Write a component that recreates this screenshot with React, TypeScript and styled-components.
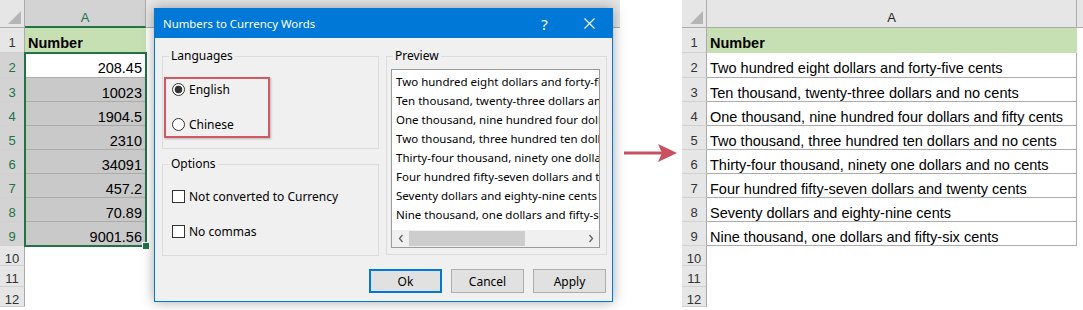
import styled, { createGlobalStyle } from 'styled-components';

const GlobalStyle = createGlobalStyle`
  html, body {
    margin: 0;
    padding: 0;
    background: #fff;
  }
  body {
    width: 1083px;
    height: 310px;
    overflow: hidden;
    font-family: "Liberation Sans", Arial, sans-serif;
  }
`;

const words = [
  'Two hundred eight dollars and forty-five cents',
  'Ten thousand, twenty-three dollars and no cents',
  'One thousand, nine hundred four dollars and fifty cents',
  'Two thousand, three hundred ten dollars and no cents',
  'Thirty-four thousand, ninety one dollars and no cents',
  'Four hundred fifty-seven dollars and twenty cents',
  'Seventy dollars and eighty-nine cents',
  'Nine thousand, one dollars and fifty-six cents',
];

const numbers = ['208.45', '10023', '1904.5', '2310', '34091', '457.2', '70.89', '9001.56'];

const rowHeights = [25, 25, 24, 24, 24, 24, 24, 24, 24, 20, 21, 20];

const GREEN = '#217346';
const GRID = '#ababab';

/* ---------- page ---------- */

const Page = styled.div`
  display: flex;
  align-items: flex-start;
  width: 1083px;
  height: 310px;
  overflow: hidden;
`;

const LeftArea = styled.div`
  position: relative;
  width: 620px;
  flex: none;
`;

const ArrowArea = styled.div`
  width: 62px;
  flex: none;
  padding: 143px 0 0 4px;
  box-sizing: border-box;
`;

const RightArea = styled.div`
  flex: 1;
`;

/* ---------- spreadsheet ---------- */

const Sheet = styled.div`
  display: flex;
  width: 100%;
`;

const Column = styled.div<{ $width?: number }>`
  display: flex;
  flex-direction: column;
  width: ${({ $width }) => ($width ? `${$width}px` : 'auto')};
  flex: ${({ $width }) => ($width ? 'none' : '1')};
`;

const Corner = styled.div`
  height: 28px;
  box-sizing: border-box;
  background: #e6e6e6;
  border-bottom: 1px solid ${GRID};
  border-right: 1px solid ${GRID};
  display: flex;
  align-items: flex-end;
  justify-content: flex-end;
  padding: 0 3px 3px 0;
`;

const CornerTriangle = styled.div`
  width: 0;
  height: 0;
  border-left: 13px solid transparent;
  border-bottom: 13px solid #b5b5b5;
`;

const ColHead = styled.div<{ $selected?: boolean }>`
  height: 28px;
  box-sizing: border-box;
  background: ${({ $selected }) => ($selected ? '#d3d3d3' : '#e6e6e6')};
  color: ${({ $selected }) => ($selected ? GREEN : '#222')};
  border-bottom: ${({ $selected }) => ($selected ? `2px solid ${GREEN}` : `1px solid ${GRID}`)};
  border-right: 1px solid ${GRID};
  font-size: 13px;
  line-height: 15px;
  text-align: center;
  padding-top: 10px;
`;

const FillerHead = styled.div`
  height: 28px;
  box-sizing: border-box;
  background: #e6e6e6;
  border-bottom: 1px solid ${GRID};
`;

const RowHead = styled.div<{ $h: number; $selected?: boolean }>`
  height: ${({ $h }) => $h}px;
  box-sizing: border-box;
  background: ${({ $selected }) => ($selected ? '#d3d3d3' : '#e6e6e6')};
  color: ${({ $selected }) => ($selected ? GREEN : '#333')};
  border-bottom: 1px solid #d0d0d0;
  border-right: 1px solid ${GRID};
  font-size: 13px;
  line-height: 14px;
  display: flex;
  align-items: center;
  justify-content: center;
  padding-top: 6px;
`;

const Cell = styled.div<{ $h: number; $fill?: string; $bordered?: boolean; $align?: string; $bold?: boolean }>`
  height: ${({ $h }) => $h}px;
  box-sizing: border-box;
  background: ${({ $fill }) => $fill || '#fff'};
  border-bottom: 1px solid ${({ $bordered }) => ($bordered ? GRID : 'transparent')};
  border-right: 1px solid ${({ $bordered }) => ($bordered ? GRID : 'transparent')};
  font-size: 14.5px;
  line-height: 17px;
  font-weight: ${({ $bold }) => ($bold ? 700 : 400)};
  color: #000;
  text-align: ${({ $align }) => $align || 'left'};
  padding: 7px 3px 0 3px;
  white-space: nowrap;
  overflow: hidden;
`;

const Selection = styled.div`
  position: relative;
  display: flex;
  flex-direction: column;

  &::before {
    content: '';
    position: absolute;
    inset: -1px -1px -1px -1px;
    border: 2px solid ${GREEN};
    pointer-events: none;
    z-index: 1;
  }

  &::after {
    content: '';
    position: absolute;
    right: -4px;
    bottom: -4px;
    width: 6px;
    height: 6px;
    background: ${GREEN};
    border: 1px solid #fff;
    z-index: 2;
  }
`;

const RowHeaders = ({ selected }: { selected?: boolean }) => (
  <Column $width={25}>
    <Corner>
      <CornerTriangle />
    </Corner>
    {rowHeights.map((h, i) => (
      <RowHead key={i} $h={h} $selected={selected && i >= 1 && i <= 8}>
        {i + 1}
      </RowHead>
    ))}
  </Column>
);

const Filler = () => (
  <Column>
    <FillerHead />
  </Column>
);

const SourceSheet = () => (
  <Sheet>
    <RowHeaders selected />
    <Column $width={121}>
      <ColHead $selected>A</ColHead>
      <Cell $h={rowHeights[0]} $fill="#c6e0b4" $bold>
        Number
      </Cell>
      <Selection>
        {numbers.map((n, i) => (
          <Cell key={n} $h={rowHeights[i + 1]} $fill={i === 0 ? '#fff' : '#c9c9c9'} $bordered $align="right">
            {n}
          </Cell>
        ))}
      </Selection>
    </Column>
    <Filler />
  </Sheet>
);

const ResultSheet = () => (
  <Sheet>
    <RowHeaders />
    <Column $width={370}>
      <ColHead>A</ColHead>
      <Cell $h={rowHeights[0]} $fill="#c6e0b4" $bold>
        Number
      </Cell>
      {words.map((w, i) => (
        <Cell key={w} $h={rowHeights[i + 1]} $bordered>
          {w}
        </Cell>
      ))}
    </Column>
    <Filler />
  </Sheet>
);

/* ---------- dialog ---------- */

const Dialog = styled.div`
  position: absolute;
  left: 154px;
  top: 8px;
  width: 459px;
  height: 294px;
  box-sizing: border-box;
  border: 1px solid #0078d7;
  background: #f0f0f0;
  box-shadow: 0 0 12px rgba(0, 0, 0, 0.35);
  display: flex;
  flex-direction: column;
  font-family: "Noto Sans", "Open Sans", sans-serif;
  font-size: 11.5px;
  color: #000;
  z-index: 5;
`;

const TitleBar = styled.div`
  height: 29px;
  flex: none;
  background: #0078d7;
  color: #fff;
  display: flex;
  align-items: center;
  padding-left: 8px;
`;

const Title = styled.div`
  flex: 1;
  font-size: 11.4px;
`;

const TitleButton = styled.div`
  width: 45px;
  height: 29px;
  display: flex;
  align-items: center;
  justify-content: center;
  font-size: 15px;
`;

const Body = styled.div`
  display: grid;
  grid-template-columns: 217px 221px;
  column-gap: 7px;
  padding: 10px 5px 0 7px;
`;

const LeftStack = styled.div`
  display: flex;
  flex-direction: column;
  gap: 7px;
`;

const Group = styled.fieldset<{ $h: number; $pt: number; $pl: number }>`
  margin: 0;
  min-width: 0;
  box-sizing: border-box;
  height: ${({ $h }) => $h}px;
  border: 1px solid #dcdcdc;
  padding: ${({ $pt, $pl }) => `${$pt}px 0 0 ${$pl}px`};
  display: flex;
  flex-direction: column;
`;

const Legend = styled.legend<{ $ml: number }>`
  padding: 0 2px;
  margin-left: ${({ $ml }) => $ml}px;
  line-height: 16px;
  font-size: 12px;
`;

const RadioFrame = styled.div`
  width: 106px;
  height: 61px;
  box-sizing: border-box;
  border: 2px solid #d05a63;
  box-shadow: 1px 1px 2px rgba(0, 0, 0, 0.25);
  display: flex;
  flex-direction: column;
  gap: 15px;
  padding-left: 6px;
`;

const OptionRow = styled.label`
  height: 20px;
  display: flex;
  align-items: center;
  gap: 4px;
  font-size: 12px;
`;

const RadioDot = styled.span<{ $checked?: boolean }>`
  width: 13px;
  height: 13px;
  box-sizing: border-box;
  border-radius: 50%;
  border: 1px solid #333;
  background: ${({ $checked }) =>
    $checked ? 'radial-gradient(circle, #333 0 3.5px, #fff 4.2px)' : '#fff'};
`;

const CheckBox = styled.span`
  width: 13px;
  height: 13px;
  box-sizing: border-box;
  border: 1px solid #333;
  background: #fff;
`;

const OptionList = styled.div`
  display: flex;
  flex-direction: column;
  gap: 15px;
`;

const ListBox = styled.div`
  width: 209px;
  height: 179px;
  box-sizing: border-box;
  border: 1px solid #9a9a9a;
  background: #fff;
  display: flex;
  flex-direction: column;
`;

const Lines = styled.div`
  flex: 1;
  overflow: hidden;
  padding: 2px 0 0 4px;
`;

const Line = styled.div`
  line-height: 19px;
  white-space: nowrap;
`;

const HScroll = styled.div`
  height: 17px;
  flex: none;
  background: #f0f0f0;
  display: flex;
  align-items: stretch;
`;

const ScrollArrow = styled.div`
  width: 17px;
  display: flex;
  align-items: center;
  justify-content: center;
`;

const Track = styled.div`
  flex: 1;
  display: flex;
  align-items: stretch;
`;

const Thumb = styled.div`
  width: 116px;
  background: #cdcdcd;
  margin: 1px 0;
`;

const ButtonRow = styled.div`
  display: flex;
  justify-content: flex-end;
  gap: 8px;
  padding: 13px 6px 0 0;
`;

const Button = styled.button<{ $primary?: boolean }>`
  width: 73px;
  height: 24px;
  box-sizing: border-box;
  background: #e1e1e1;
  border: ${({ $primary }) => ($primary ? '2px solid #0078d7' : '1px solid #adadad')};
  font-family: inherit;
  font-size: 12px;
  color: #000;
  padding: 0;
  margin-left: ${({ $primary }) => ($primary ? '0' : '1px')};
`;

const Chevron = ({ dir }: { dir: 'left' | 'right' }) => (
  <svg width="6" height="9" viewBox="0 0 6 9">
    <path
      d={dir === 'left' ? 'M4.5 1 L1.5 4.5 L4.5 8' : 'M1.5 1 L4.5 4.5 L1.5 8'}
      fill="none"
      stroke="#606060"
      strokeWidth="1.3"
    />
  </svg>
);

const CurrencyDialog = () => (
  <Dialog>
    <TitleBar>
      <Title>Numbers to Currency Words</Title>
      <TitleButton>?</TitleButton>
      <TitleButton>
        <svg width="11" height="11" viewBox="0 0 11 11">
          <path d="M0.5 0.5 L10.5 10.5 M10.5 0.5 L0.5 10.5" stroke="#fff" strokeWidth="1.1" />
        </svg>
      </TitleButton>
    </TitleBar>
    <Body>
      <LeftStack>
        <Group $h={101} $pt={13} $pl={1}>
          <Legend $ml={5}>Languages</Legend>
          <RadioFrame>
            <OptionRow>
              <RadioDot $checked />
              English
            </OptionRow>
            <OptionRow>
              <RadioDot />
              Chinese
            </OptionRow>
          </RadioFrame>
        </Group>
        <Group $h={100} $pt={14} $pl={9}>
          <Legend $ml={-3}>Options</Legend>
          <OptionList>
            <OptionRow>
              <CheckBox />
              Not converted to Currency
            </OptionRow>
            <OptionRow>
              <CheckBox />
              No commas
            </OptionRow>
          </OptionList>
        </Group>
      </LeftStack>
      <Group $h={207} $pt={5} $pl={4}>
        <Legend $ml={2}>Preview</Legend>
        <ListBox>
          <Lines>
            {words.map((w) => (
              <Line key={w}>{w}</Line>
            ))}
          </Lines>
          <HScroll>
            <ScrollArrow>
              <Chevron dir="left" />
            </ScrollArrow>
            <Track>
              <Thumb />
            </Track>
            <ScrollArrow>
              <Chevron dir="right" />
            </ScrollArrow>
          </HScroll>
        </ListBox>
      </Group>
    </Body>
    <ButtonRow>
      <Button $primary>Ok</Button>
      <Button>Cancel</Button>
      <Button>Apply</Button>
    </ButtonRow>
  </Dialog>
);

const Arrow = () => (
  <svg width="54" height="20" viewBox="0 0 54 20">
    <path d="M0 10 L40 10" stroke="#c9505e" strokeWidth="3" />
    <path d="M34 1 L53 10 L34 19 L38 10 Z" fill="#c9505e" />
  </svg>
);

export default function App() {
  return (
    <>
      <GlobalStyle />
      <Page>
        <LeftArea>
          <SourceSheet />
          <CurrencyDialog />
        </LeftArea>
        <ArrowArea>
          <Arrow />
        </ArrowArea>
        <RightArea>
          <ResultSheet />
        </RightArea>
      </Page>
    </>
  );
}
